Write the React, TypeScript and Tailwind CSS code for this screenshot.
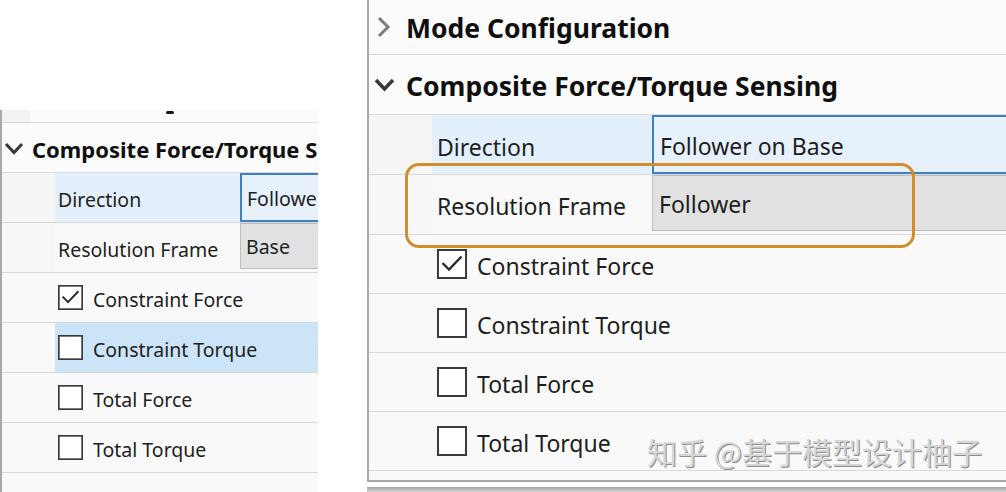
import React from "react";

const ui = "font-['Noto_Sans','DejaVu_Sans',sans-serif]";

function ChevronRight() {
  return (
    <svg width="37" height="40" viewBox="0 0 37 40" className="shrink-0">
      <path d="M10 11 L19 20 L10 29" fill="none" stroke="#7c7c7c" strokeWidth="3" strokeLinejoin="miter" />
    </svg>
  );
}

function ChevronDownLarge() {
  return (
    <svg width="37" height="40" viewBox="0 0 37 40" className="shrink-0">
      <path d="M7 15 L15.5 24 L24 15" fill="none" stroke="#383838" strokeWidth="3.5" strokeLinejoin="miter" />
    </svg>
  );
}

function ChevronDownSmall() {
  return (
    <svg width="30" height="34" viewBox="0 0 30 34" className="shrink-0">
      <path d="M4 13 L12 21.5 L20 13" fill="none" stroke="#383838" strokeWidth="3" strokeLinejoin="miter" />
    </svg>
  );
}

function CheckBox({ size, checked }: { size: number; checked?: boolean }) {
  return (
    <svg width={size} height={size} viewBox="0 0 30 30" className="shrink-0">
      <rect x="1" y="1" width="28" height="28" fill="#ffffff" stroke="#3a3a3a" strokeWidth="2" />
      {checked && (
        <path d="M5.5 14 L12 20.5 L24.5 7.5" fill="none" stroke="#2b2b2b" strokeWidth="2.4" />
      )}
    </svg>
  );
}

/* Large property panel on the right */
function RightPanel() {
  const checks: { label: string; checked?: boolean }[] = [
    { label: "Constraint Force", checked: true },
    { label: "Constraint Torque" },
    { label: "Total Force" },
    { label: "Total Torque" },
  ];
  return (
    <div className="flex flex-col w-[639px]">
      <div className="h-[482px] flex flex-col border-l-2 border-b-2 border-[#a9a9a9] bg-[#f9f9f9] text-[#1e1e1e]">
        <div className="h-[55px] shrink-0 flex items-center border-b border-[#d9d9d9] bg-[#fbfbfb]">
          <ChevronRight />
          <span className="pt-[2px] text-[26.5px] font-bold text-[#0f0f0f] leading-none">Mode Configuration</span>
        </div>
        <div className="h-[60px] shrink-0 flex items-center border-b border-[#d9d9d9] bg-[#fbfbfb]">
          <ChevronDownLarge />
          <span className="pt-[3px] text-[26.5px] font-bold text-[#0f0f0f] leading-none">Composite Force/Torque Sensing</span>
        </div>
        <div className="h-[60px] shrink-0 flex border-b border-[#d9d9d9]">
          <div className="w-[63px] shrink-0 bg-[#f5f5f5]" />
          <div className="w-[220px] shrink-0 flex items-center pl-[5px] pt-[5px] bg-[#e3effb] text-[23px]">Direction</div>
          <div className="flex-1 flex items-center pl-[6px] pt-[3px] border-2 border-r-0 border-[#3f80c2] bg-[#e6f1fb] text-[23px]">
            Follower on Base
          </div>
        </div>
        <div className="h-[60px] shrink-0 flex border-b border-[#d9d9d9]">
          <div className="w-[63px] shrink-0 bg-[#f7f7f7]" />
          <div className="w-[220px] shrink-0 flex items-center pl-[5px] pt-[4px] text-[23px]">Resolution Frame</div>
          <div className="flex-1 mb-[3px] flex items-center pl-[6px] pt-[2px] border border-r-0 border-[#bdbdbd] bg-[#e1e1e1] text-[23px]">
            Follower
          </div>
        </div>
        {checks.map((c) => (
          <div key={c.label} className="h-[59px] shrink-0 flex items-center border-b border-[#d9d9d9]">
            <div className="w-[68px] shrink-0" />
            <CheckBox size={30} checked={c.checked} />
            <span className="ml-[10px] pt-[4px] text-[23px]">{c.label}</span>
          </div>
        ))}
        <div className="flex-1" />
      </div>
      <div className="mt-[5px] h-[5px] bg-gradient-to-b from-[#a3a3a3] to-[#d6d6d6]" />
    </div>
  );
}

/* Smaller, clipped copy of the same panel on the left */
function LeftPanel() {
  const checks: { label: string; checked?: boolean; active?: boolean }[] = [
    { label: "Constraint Force", checked: true },
    { label: "Constraint Torque", active: true },
    { label: "Total Force" },
    { label: "Total Torque" },
  ];
  return (
    <div className="w-[318px] shrink-0 pt-[110px] overflow-hidden">
      <div className="h-[382px] flex flex-col border-l-2 border-[#a9a9a9] bg-[#f9f9f9] text-[#1e1e1e]">
        <div className="h-[13px] shrink-0 flex items-start border-b border-[#d9d9d9] bg-[#fbfbfb]">
          <div className="w-[28px] h-full shrink-0 bg-[#f3f3f3]" />
          <div className="ml-[136px] mt-[1px] w-[8px] h-[3px] rounded-full bg-[#151515]" />
        </div>
        <div className="h-[50px] shrink-0 flex items-center border-b border-[#d9d9d9] bg-[#fbfbfb]">
          <ChevronDownSmall />
          <span className="pt-[3px] text-[22px] font-bold text-[#0f0f0f] leading-none whitespace-nowrap">
            Composite Force/Torque Sensing
          </span>
        </div>
        <div className="h-[50px] shrink-0 flex border-b border-[#d9d9d9]">
          <div className="w-[53px] shrink-0 bg-[#f5f5f5]" />
          <div className="w-[185px] shrink-0 flex items-center pl-[3px] pt-[4px] bg-[#e3effb] text-[19.5px]">Direction</div>
          <div className="w-[120px] shrink-0 flex items-center pl-[5px] pt-[2px] border-2 border-r-0 border-[#3f80c2] bg-[#e6f1fb] text-[19.5px] whitespace-nowrap">
            Follower on Base
          </div>
        </div>
        <div className="h-[50px] shrink-0 flex border-b border-[#d9d9d9]">
          <div className="w-[53px] shrink-0 bg-[#f7f7f7]" />
          <div className="w-[185px] shrink-0 flex items-center pl-[3px] pt-[4px] text-[19.5px] whitespace-nowrap">Resolution Frame</div>
          <div className="w-[120px] shrink-0 mb-[3px] flex items-center pl-[5px] pt-[2px] border border-r-0 border-[#bdbdbd] bg-[#e1e1e1] text-[19.5px]">
            Base
          </div>
        </div>
        {checks.map((c) => (
          <div key={c.label} className="h-[50px] shrink-0 flex border-b border-[#d9d9d9]">
            <div className="w-[53px] shrink-0" />
            <div className={`flex-1 flex items-center pl-[3px] ${c.active ? "bg-[#cce4f7]" : ""}`}>
              <CheckBox size={25} checked={c.checked} />
              <span className="ml-[10px] pt-[4px] text-[19.5px] whitespace-nowrap">{c.label}</span>
            </div>
          </div>
        ))}
        <div className="flex-1" />
      </div>
    </div>
  );
}

export default function App() {
  return (
    <div className={`relative w-[1006px] h-[492px] overflow-hidden bg-white flex ${ui}`}>
      <LeftPanel />
      <div className="w-[49px] shrink-0" />
      <RightPanel />
      {/* highlight around the Resolution Frame row */}
      <div className="absolute left-[405px] top-[163px] w-[510px] h-[85px] rounded-[14px] border-[3px] border-[#d28d2d]" />
      {/* site watermark */}
      <div className="absolute left-[647px] top-[436px] text-[30px] leading-none text-[#d6d6d6] font-['Noto_Sans_CJK_SC',sans-serif] [text-shadow:1px_1px_0_#8c8c8c] whitespace-nowrap">
        知乎 @基于模型设计柚子
      </div>
    </div>
  );
}
